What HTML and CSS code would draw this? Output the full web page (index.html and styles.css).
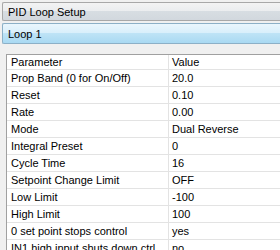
FILE: index.html
```html
<!DOCTYPE html>
<html>
<head>
<meta charset="utf-8">
<link rel="stylesheet" href="styles.css">
</head>
<body>
<div class="page">
  <div class="bar title-bar">PID Loop Setup</div>
  <div class="bar loop-bar">Loop 1</div>
  <div class="grid">
    <div class="row head"><div class="c1">Parameter</div><div class="c2">Value</div></div>
    <div class="row"><div class="c1">Prop Band (0 for On/Off)</div><div class="c2">20.0</div></div>
    <div class="row"><div class="c1">Reset</div><div class="c2">0.10</div></div>
    <div class="row"><div class="c1">Rate</div><div class="c2">0.00</div></div>
    <div class="row"><div class="c1">Mode</div><div class="c2">Dual Reverse</div></div>
    <div class="row"><div class="c1">Integral Preset</div><div class="c2">0</div></div>
    <div class="row"><div class="c1">Cycle Time</div><div class="c2">16</div></div>
    <div class="row"><div class="c1">Setpoint Change Limit</div><div class="c2">OFF</div></div>
    <div class="row"><div class="c1">Low Limit</div><div class="c2">-100</div></div>
    <div class="row"><div class="c1">High Limit</div><div class="c2">100</div></div>
    <div class="row"><div class="c1">0 set point stops control</div><div class="c2">yes</div></div>
    <div class="row"><div class="c1">IN1 high input shuts down ctrl</div><div class="c2">no</div></div>
  </div>
</div>
</body>
</html>
```
FILE: styles.css
```css
html, body {
  margin: 0;
  padding: 0;
  overflow: hidden;
  background: #f0f0f0;
}
.page {
  width: 280px;
  height: 250px;
  overflow: hidden;
  font-family: "Liberation Sans", Arial, sans-serif;
  font-size: 11px;
  color: #000;
  padding-top: 2px;
  box-sizing: border-box;
}
.bar {
  margin-left: 2px;
  width: 300px;
  box-sizing: border-box;
  border: 1px solid #a6a6a6;
  border-right: none;
  border-radius: 2px 0 0 2px;
  padding-left: 5px;
  display: flex;
  align-items: center;
  font-size: 11px;
}
.title-bar {
  height: 19px;
  background: linear-gradient(#f3f3f3 0%, #ebedef 45%, #d7dde2 50%, #d2d8de 100%);
  border-color: #a8a8a8;
}
.loop-bar {
  margin-top: 2px;
  height: 21px;
  background: linear-gradient(#eaf6fd 0%, #d9effb 45%, #bee3f6 50%, #a9d9f2 100%);
  border-color: #8cb0c7;
}
.grid {
  margin-top: 10px;
  margin-left: 6px;
  width: 300px;
  background: #fff;
  border-top: 1px solid #a0a0a0;
  border-left: 1px solid #a0a0a0;
}
.row {
  display: flex;
  height: 17px;
  box-sizing: border-box;
  border-bottom: 1px solid #e3e3e3;
  line-height: 16px;
}
.row.head {
  height: 15px;
  line-height: 14px;
  border-bottom-color: #e3e3e3;
}
.c1 {
  width: 162px;
  box-sizing: border-box;
  padding-left: 4px;
  border-right: 1px solid #e3e3e3;
  white-space: nowrap;
  overflow: hidden;
}
.c2 {
  padding-left: 3px;
  white-space: nowrap;
}
```
